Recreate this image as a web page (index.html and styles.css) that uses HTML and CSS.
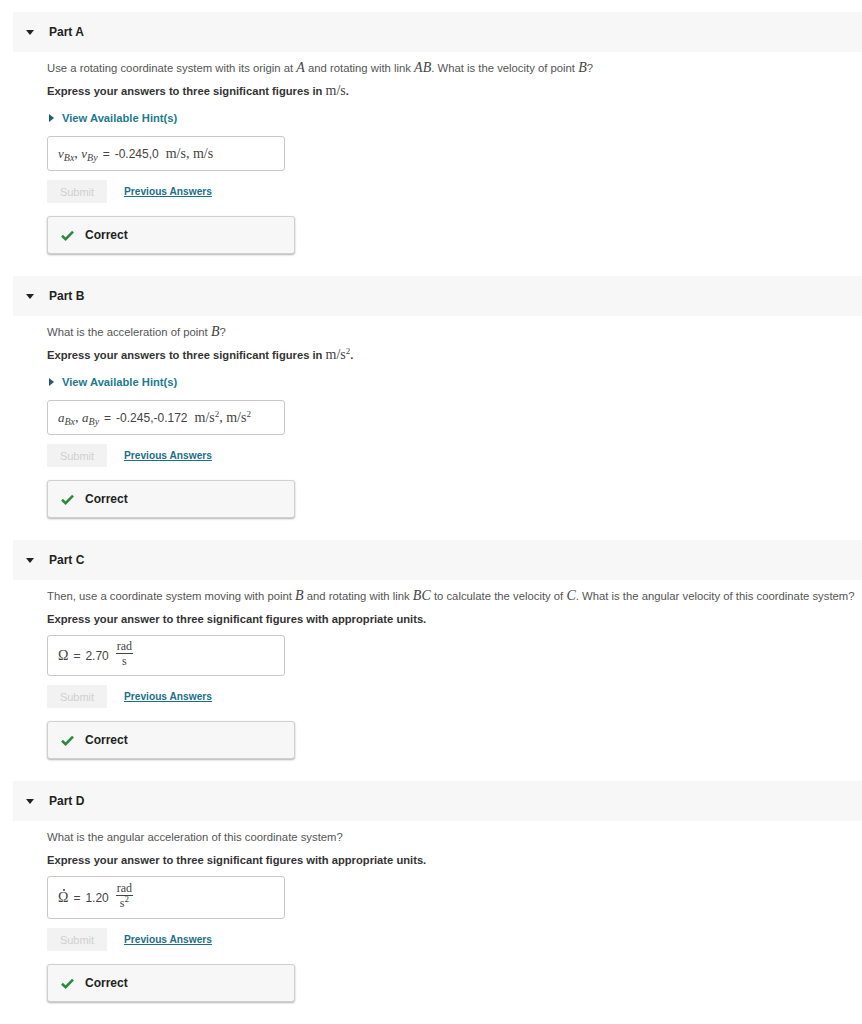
FILE: index.html
```html
<!DOCTYPE html>
<html lang="en">
<head>
    <meta charset="UTF-8">
    <title>Parts</title>
    <link rel="stylesheet" href="styles.css">
</head>
<body>
    <!-- Part A -->
    <div class="part">
        <div class="part-head"><span class="caret"></span>Part A</div>
        <div class="part-body">
            <p class="desc">Use a rotating coordinate system with its origin at <i class="m">A</i> and rotating with link <i class="m">AB</i>. What is the velocity of point <i class="m">B</i>?</p>
            <p class="instr">Express your answers to three significant figures in <span class="mu">m/s</span>.</p>
            <div class="hint"><span class="hint-caret"></span>View Available Hint(s)</div>
            <div class="answer">
                <span class="label"><i class="m">v<sub>Bx</sub></i><span class="mu">, </span><i class="m">v<sub>By</sub></i></span>
                <span class="eq">=</span>
                <span class="val">-0.245,0</span>
                <span class="mu">m/s, m/s</span>
            </div>
            <div class="actions">
                <button class="submit" disabled>Submit</button>
                <a class="prev" href="#">Previous Answers</a>
            </div>
            <div class="correct">
                <svg class="check" width="13" height="11" viewBox="0 0 13 11"><path d="M1 5.8 L4.6 9.2 L12 1.6" fill="none" stroke="#2b8a3e" stroke-width="2.6"/></svg>
                Correct
            </div>
        </div>
    </div>

    <!-- Part B -->
    <div class="part">
        <div class="part-head"><span class="caret"></span>Part B</div>
        <div class="part-body">
            <p class="desc">What is the acceleration of point <i class="m">B</i>?</p>
            <p class="instr">Express your answers to three significant figures in <span class="mu">m/s<sup>2</sup></span>.</p>
            <div class="hint"><span class="hint-caret"></span>View Available Hint(s)</div>
            <div class="answer">
                <span class="label"><i class="m">a<sub>Bx</sub></i><span class="mu">, </span><i class="m">a<sub>By</sub></i></span>
                <span class="eq">=</span>
                <span class="val">-0.245,-0.172</span>
                <span class="mu">m/s<sup>2</sup>, m/s<sup>2</sup></span>
            </div>
            <div class="actions">
                <button class="submit" disabled>Submit</button>
                <a class="prev" href="#">Previous Answers</a>
            </div>
            <div class="correct">
                <svg class="check" width="13" height="11" viewBox="0 0 13 11"><path d="M1 5.8 L4.6 9.2 L12 1.6" fill="none" stroke="#2b8a3e" stroke-width="2.6"/></svg>
                Correct
            </div>
        </div>
    </div>

    <!-- Part C -->
    <div class="part">
        <div class="part-head"><span class="caret"></span>Part C</div>
        <div class="part-body">
            <p class="desc">Then, use a coordinate system moving with point <i class="m">B</i> and rotating with link <i class="m">BC</i> to calculate the velocity of <i class="m">C</i>. What is the angular velocity of this coordinate system?</p>
            <p class="instr">Express your answer to three significant figures with appropriate units.</p>
            <div class="answer tall">
                <span class="mu">Ω</span>
                <span class="eq">=</span>
                <span class="val">2.70</span>
                <span class="frac"><span class="num">rad</span><span class="den">s</span></span>
            </div>
            <div class="actions">
                <button class="submit" disabled>Submit</button>
                <a class="prev" href="#">Previous Answers</a>
            </div>
            <div class="correct">
                <svg class="check" width="13" height="11" viewBox="0 0 13 11"><path d="M1 5.8 L4.6 9.2 L12 1.6" fill="none" stroke="#2b8a3e" stroke-width="2.6"/></svg>
                Correct
            </div>
        </div>
    </div>

    <!-- Part D -->
    <div class="part">
        <div class="part-head"><span class="caret"></span>Part D</div>
        <div class="part-body">
            <p class="desc">What is the angular acceleration of this coordinate system?</p>
            <p class="instr">Express your answer to three significant figures with appropriate units.</p>
            <div class="answer taller">
                <span class="mu dot">Ω</span>
                <span class="eq">=</span>
                <span class="val">1.20</span>
                <span class="frac"><span class="num">rad</span><span class="den">s<sup>2</sup></span></span>
            </div>
            <div class="actions">
                <button class="submit" disabled>Submit</button>
                <a class="prev" href="#">Previous Answers</a>
            </div>
            <div class="correct">
                <svg class="check" width="13" height="11" viewBox="0 0 13 11"><path d="M1 5.8 L4.6 9.2 L12 1.6" fill="none" stroke="#2b8a3e" stroke-width="2.6"/></svg>
                Correct
            </div>
        </div>
    </div>
</body>
</html>
```

FILE: styles.css
```css
body {
    margin: 0;
    padding: 12px 0 0 13px;
    background: white;
    color: #333;
    font-family: "Liberation Sans", Arial, sans-serif;
    font-size: 12px;
}

p {
    margin: 0;
}

.part {
    padding-bottom: 22px;
}

.part-head {
    background-color: #f7f7f7;
    height: 40px;
    display: flex;
    align-items: center;
    padding-left: 13px;
    font-weight: bold;
    color: #222;
}

.caret {
    width: 0;
    height: 0;
    border-left: 4px solid transparent;
    border-right: 4px solid transparent;
    border-top: 5px solid #222;
    margin-right: 15px;
}

.part-body {
    padding-left: 34px;
}

.desc {
    margin-top: 8px;
    line-height: 16px;
    font-size: 11.3px;
    color: #555;
    white-space: nowrap;
}

.instr {
    margin-top: 7px;
    line-height: 16px;
    font-size: 11.2px;
    font-weight: bold;
}

.desc .m,
.instr .mu {
    line-height: 0;
}

.m {
    font-family: "Liberation Serif", "Times New Roman", serif;
    font-style: italic;
    font-size: 14px;
    color: #444;
}

.mu {
    font-family: "Liberation Serif", "Times New Roman", serif;
    font-size: 14px;
    font-weight: normal;
    color: #444;
}

sub {
    font-size: 10px;
    line-height: 0;
    vertical-align: -3px;
}

sup {
    font-size: 9px;
    line-height: 0;
    vertical-align: 5px;
}

.hint {
    margin-top: 11px;
    line-height: 16px;
    font-size: 11.2px;
    font-weight: bold;
    color: #1c7a90;
    display: flex;
    align-items: center;
}

.hint-caret {
    width: 0;
    height: 0;
    border-top: 4px solid transparent;
    border-bottom: 4px solid transparent;
    border-left: 5px solid #1c5d73;
    margin: 0 8px 0 2px;
}

.answer {
    margin-top: 10px;
    width: 216px;
    height: 33px;
    border: 1px solid #c8c8c8;
    border-radius: 3px;
    padding: 0 10px;
    display: flex;
    align-items: center;
    gap: 4px;
    color: #444;
}

.instr + .answer {
    margin-top: 8px;
}

.answer.tall {
    height: 39px;
}

.answer.taller {
    height: 41px;
}

.label .m {
    font-size: 13px;
}

.eq {
    margin: 0 1px;
}

.val {
    margin-right: 3px;
}

.frac {
    display: inline-flex;
    flex-direction: column;
    align-items: center;
    font-family: "Liberation Serif", "Times New Roman", serif;
    font-size: 12px;
    line-height: 12px;
    margin-top: -4px;
}

.num {
    border-bottom: 1px solid #444;
    padding: 0 1px 1px;
}

.den {
    padding-top: 1px;
}

.dot {
    position: relative;
}

.dot::before {
    content: "";
    position: absolute;
    left: 5px;
    top: -1px;
    width: 2px;
    height: 2px;
    background: #444;
    border-radius: 50%;
}

.actions {
    margin-top: 9px;
    height: 23px;
    display: flex;
    align-items: center;
}

.submit {
    width: 60px;
    height: 23px;
    border: none;
    background-color: #f2f2f2;
    color: #d0d0d0;
    font-family: "Liberation Sans", Arial, sans-serif;
    font-size: 11px;
    padding: 0;
}

.prev {
    margin-left: 17px;
    font-size: 10.2px;
    font-weight: bold;
    color: #1c6f89;
    text-decoration: underline;
}

.correct {
    margin-top: 13px;
    width: 246px;
    height: 36px;
    border: 1px solid #d0d0d0;
    border-radius: 3px;
    background-color: #f7f7f7;
    box-shadow: 0 1px 2px rgba(0, 0, 0, 0.3);
    display: flex;
    align-items: center;
    font-weight: bold;
    color: #222;
}

.check {
    margin: 0 11px 0 13px;
}
```
